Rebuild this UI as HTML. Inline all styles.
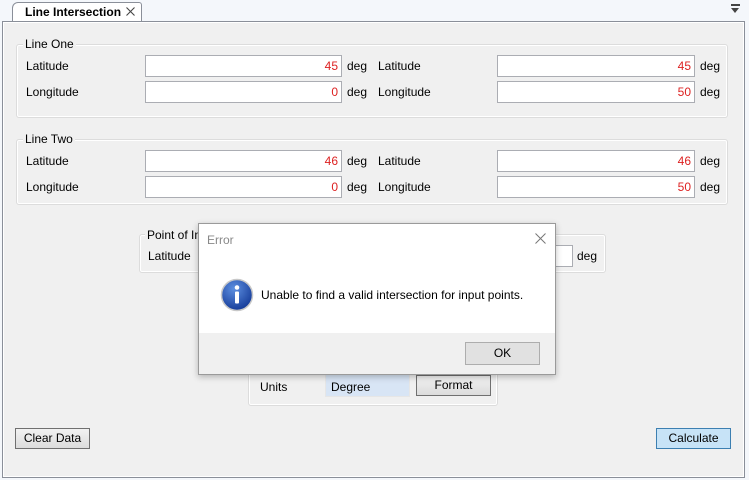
<!DOCTYPE html>
<html><head><style>
*{box-sizing:border-box;margin:0;padding:0}
body{width:749px;height:480px;overflow:hidden;background:#f4f7fb;font-family:"Liberation Sans",sans-serif;font-size:12px;color:#000;position:relative}
.a{position:absolute}
.grp{position:absolute;border:1px solid #dcdcdc;border-radius:3px;box-shadow:inset 0 0 0 1px #fff}
.gl{position:absolute;background:#f0f0f0;padding:0 2px;top:-8px;left:6px;line-height:14px}
.inp{position:absolute;background:#fff;border:1px solid #abadb3;height:22px;text-align:right;padding-right:3px;line-height:20px;color:#d22}
.lbl{position:absolute;line-height:14px}
.btn{position:absolute;border:1px solid #707070;background:linear-gradient(#f2f2f2,#dcdcdc);text-align:center;line-height:18px}
</style></head><body>
<div class="a" style="left:0;top:0;width:749px;height:22px;background:#f4f7fb"></div>
<div class="a" style="left:12px;top:2px;width:130px;height:21px;background:#fff;border:1px solid #8a8f99;border-bottom:none;border-radius:6px 3px 0 0"></div>
<div class="a" style="left:25px;top:5px;font-weight:bold;font-size:12px">Line Intersection</div>
<svg class="a" style="left:126px;top:7px" width="9" height="9"><path d="M0.5 0.5L8.5 8.5M8.5 0.5L0.5 8.5" stroke="#444" stroke-width="1.1"/></svg>
<div class="a" style="left:731px;top:4px;width:9px;height:2px;background:#444"></div>
<div class="a" style="left:731px;top:8px;width:0;height:0;border-left:4.5px solid transparent;border-right:4.5px solid transparent;border-top:5px solid #444"></div>
<div class="a" style="left:2px;top:21px;width:743px;height:457px;background:#f0f0f0;border:1px solid #8a8f99;box-shadow:inset 0 0 0 1px #fff"></div>

<div class="grp" style="left:16px;top:44px;width:712px;height:74px"><span class="gl">Line One</span></div>
<div class="lbl" style="left:26px;top:59px">Latitude</div>
<div class="inp" style="left:145px;top:55px;width:197px">45</div>
<div class="lbl" style="left:347px;top:59px">deg</div>
<div class="lbl" style="left:378px;top:59px">Latitude</div>
<div class="inp" style="left:497px;top:55px;width:198px">45</div>
<div class="lbl" style="left:700px;top:59px">deg</div>
<div class="lbl" style="left:26px;top:85px">Longitude</div>
<div class="inp" style="left:145px;top:81px;width:197px">0</div>
<div class="lbl" style="left:347px;top:85px">deg</div>
<div class="lbl" style="left:378px;top:85px">Longitude</div>
<div class="inp" style="left:497px;top:81px;width:198px">50</div>
<div class="lbl" style="left:700px;top:85px">deg</div>

<div class="grp" style="left:16px;top:139px;width:712px;height:66px"><span class="gl">Line Two</span></div>
<div class="lbl" style="left:26px;top:154px">Latitude</div>
<div class="inp" style="left:145px;top:150px;width:197px">46</div>
<div class="lbl" style="left:347px;top:154px">deg</div>
<div class="lbl" style="left:378px;top:154px">Latitude</div>
<div class="inp" style="left:497px;top:150px;width:198px">46</div>
<div class="lbl" style="left:700px;top:154px">deg</div>
<div class="lbl" style="left:26px;top:180px">Longitude</div>
<div class="inp" style="left:145px;top:176px;width:197px">0</div>
<div class="lbl" style="left:347px;top:180px">deg</div>
<div class="lbl" style="left:378px;top:180px">Longitude</div>
<div class="inp" style="left:497px;top:176px;width:198px">50</div>
<div class="lbl" style="left:700px;top:180px">deg</div>

<div class="grp" style="left:139px;top:234px;width:467px;height:39px"><span class="gl" style="left:5px;top:-7px">Point of Intersection</span></div>
<div class="lbl" style="left:148px;top:249px">Latitude</div>
<div class="inp" style="left:450px;top:245px;width:123px"></div>
<div class="lbl" style="left:577px;top:249px">deg</div>

<div class="grp" style="left:248px;top:360px;width:250px;height:46px"></div>
<div class="lbl" style="left:260px;top:380px">Units</div>
<div class="a" style="left:325px;top:374px;width:85px;height:23px;background:#d8e5f5;border:1px solid #e6e6e6;padding-left:5px;line-height:24px">Degree</div>
<div class="btn" style="left:416px;top:375px;width:75px;height:21px">Format</div>

<div class="btn" style="left:15px;top:428px;width:75px;height:21px">Clear Data</div>
<div class="btn" style="left:656px;top:428px;width:75px;height:21px;background:#c7e3f7;border-color:#3c7fb1">Calculate</div>

<div class="a" style="left:198px;top:223px;width:358px;height:152px;background:#f0f0f0;border:1px solid #9a9a9a;box-shadow:0 2px 6px rgba(0,0,0,.25)">
 <div class="a" style="left:0;top:0;width:356px;height:109px;background:#fff"></div>
 <div class="a" style="left:8px;top:9px;color:#888">Error</div>
 <svg class="a" style="left:336px;top:9px" width="11" height="11"><path d="M0.5 0.5L10.5 10.5M10.5 0.5L0.5 10.5" stroke="#777" stroke-width="1"/></svg>
 <svg class="a" style="left:21px;top:54px" width="34" height="34" viewBox="0 0 34 34">
  <defs><radialGradient id="g" cx="40%" cy="30%" r="70%"><stop offset="0" stop-color="#5d8fe0"/><stop offset="1" stop-color="#173d9a"/></radialGradient></defs>
  <circle cx="17" cy="17" r="15.5" fill="url(#g)" stroke="#c8c8c8" stroke-width="1.5"/>
  <circle cx="17" cy="9.5" r="2.3" fill="#fff"/>
  <rect x="15" y="13.5" width="4" height="12" rx="1" fill="#fff"/>
 </svg>
 <div class="a" style="left:62px;top:64px;font-size:12px">Unable to find a valid intersection for input points.</div>
 <div class="btn" style="left:266px;top:118px;width:75px;height:23px;line-height:21px;background:#e1e1e1;border-color:#adadad">OK</div>
</div>
</body></html>
